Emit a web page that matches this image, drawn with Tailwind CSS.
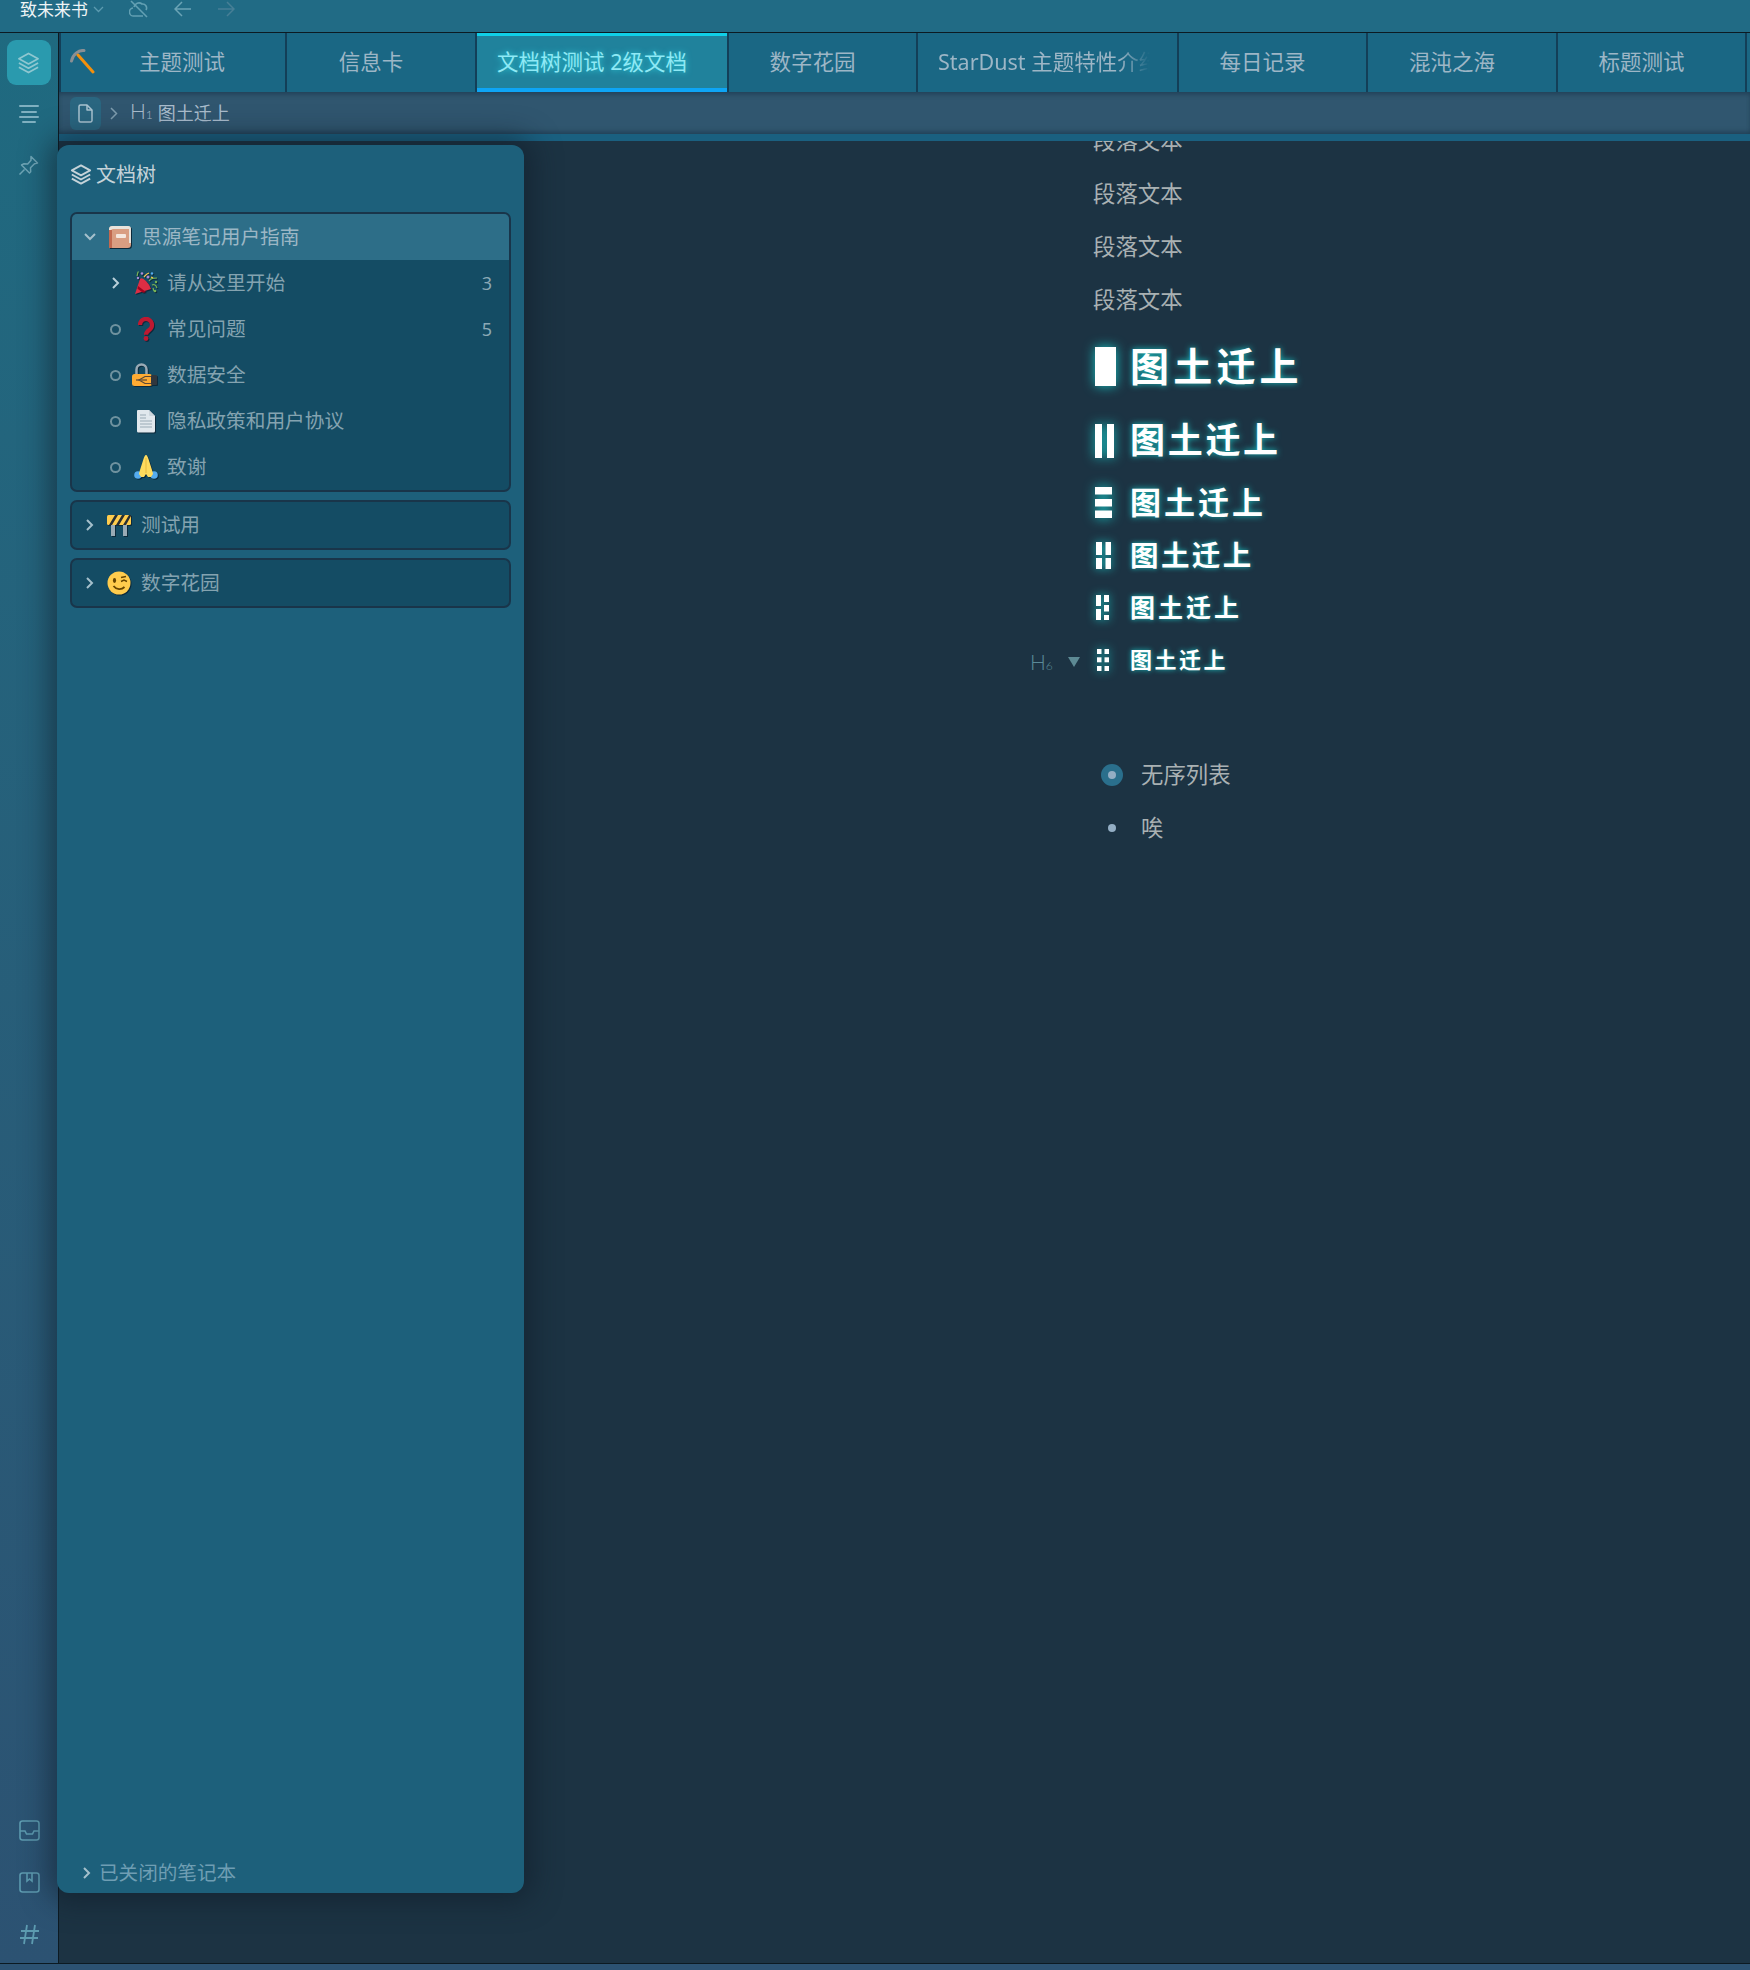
<!DOCTYPE html>
<html lang="zh">
<head>
  <meta charset="UTF-8" />
  <title>致未来书</title>
  <script src="https://cdn.jsdelivr.net/npm/@tailwindcss/browser@4"></script>
</head>
<body class="bg-[#1c3343] font-['Noto_Sans','Noto_Sans_CJK_SC',sans-serif]">
<div class="relative w-[1750px] h-[1970px] overflow-hidden flex flex-col">

  <!-- Top bar -->
  <div class="h-[33px] shrink-0 border-b border-[#0c1a22] bg-[#216b85] flex items-start">
    <span class="ml-[20px] text-[17px] leading-[20px] text-[#eef4f6]">致未来书</span>
    <svg class="ml-[5px] mt-[6px] w-[11px] h-[7px]" viewBox="0 0 11 7" fill="none" stroke="#5c9bb0" stroke-width="1.3"><path d="M1 1l4.500 4.500L10 1"/></svg>
    <svg class="ml-[25px] mt-[-1px] w-[20px] h-[20px]" viewBox="0 0 20 20" fill="none" stroke="#63a0b3" stroke-width="1.6"><path d="M5 8a5 5 0 0 1 8-3 4 4 0 0 1 4 6M4 9a4 4 0 0 0 1 8h9M2 2l16 16"/></svg>
    <svg class="ml-[25px] mt-[1px] w-[18px] h-[16px]" viewBox="0 0 18 16" fill="none" stroke="#6ba4b6" stroke-width="1.5"><path d="M17 8H1M8 1L1 8l7 7"/></svg>
    <svg class="ml-[25px] mt-[1px] w-[18px] h-[16px]" viewBox="0 0 18 16" fill="none" stroke="#477f96" stroke-width="1.5"><path d="M1 8h16M10 1l7 7-7 7"/></svg>
  </div>

  <div class="flex-1 flex min-h-0">
    <!-- Left dock -->
    <div class="w-[59px] shrink-0 border-r border-[#0c1a22] bg-gradient-to-b from-[#1f6a80] to-[#2c5272] flex flex-col items-center pb-[18px]">
      <div class="mt-[7px] ml-[-1px] w-[44px] h-[45px] rounded-[9px] bg-[#2a9aae] flex items-center justify-center">
        <svg class="w-[23px] h-[23px]" viewBox="0 0 24 24" fill="none" stroke="#8fc7d0" stroke-width="1.800" stroke-linejoin="round"><path d="M12 2.500l10 5.500-10 5.500L2 8z"/><path d="M2 12.500l10 5.500 10-5.500M2 17l10 5.500L22 17"/></svg>
      </div>
      <svg class="mt-[18px] ml-[-1px] w-[20px] h-[21px]" viewBox="0 0 20 21" fill="none" stroke="#7fb0c0" stroke-width="2" stroke-linecap="round"><path d="M1 3h18M3 9h14M1 14h18M4 19h12"/></svg>
      <svg class="mt-[31px] ml-[-1px] w-[21px] h-[21px]" viewBox="0 0 21 21" fill="none" stroke="#6fa5b6" stroke-width="1.500" stroke-linejoin="round"><path d="M13 1.500l6.500 6.500-3 .8-4 4 .2 4-1.200 1.200-8-8L5.700 8.800l4 .2 3.300-3.800z M6.500 14.500L1.500 19.500"/></svg>
      <div class="mt-auto flex flex-col items-center">
        <svg class="w-[21px] h-[21px]" viewBox="0 0 21 21" fill="none" stroke="#5d9bb0" stroke-width="1.600"><rect x="1" y="1" width="19" height="19" rx="2.500"/><path d="M1 11h5l1.500 3h6l1.500-3h5"/></svg>
        <svg class="mt-[31px] w-[21px] h-[21px]" viewBox="0 0 21 21" fill="none" stroke="#5d9bb0" stroke-width="1.600"><rect x="1" y="1" width="19" height="19" rx="2.500"/><path d="M8 1v8l2.500-2 2.500 2V1"/></svg>
        <svg class="mt-[31px] w-[21px] h-[21px]" viewBox="0 0 21 21" fill="none" stroke="#5d9bb0" stroke-width="1.800"><path d="M8 1L5 20M16 1l-3 19M2 7h18M1 14h18"/></svg>
      </div>
    </div>

    <div class="flex-1 flex flex-col min-w-0">
      <!-- Tabs -->
      <div class="h-[59px] shrink-0 flex bg-[#133f58] text-[21.500px] text-[#9db6c6] pl-[2px] gap-[2px]">
        <div class="w-[224px] bg-[#1a6784] flex items-center relative">
          <svg class="absolute left-[9px] top-[16px] w-[25px] h-[25px]" viewBox="0 0 25 25" fill="none" stroke-linecap="round"><path d="M1.500 12C3 5 9 1 14 1.500" stroke="#8a8f94" stroke-width="3"/><path d="M8 6l15 17" stroke="#f4900c" stroke-width="3"/></svg>
          <span class="ml-[78px]">主题测试</span>
        </div>
        <div class="w-[188px] pr-[20px] bg-[#1a6784] flex items-center justify-center">信息卡</div>
        <div class="w-[250px] pr-[20px] bg-[#20829c] border-t-[3px] border-t-[#10cfe8] border-b-[4px] border-b-[#0ea5f5] flex items-center justify-center text-[#8fe9f5] [text-shadow:0_0_6px_#2dd4e0]">文档树测试 2级文档</div>
        <div class="w-[187px] pr-[20px] bg-[#1a6784] flex items-center justify-center">数字花园</div>
        <div class="w-[259px] bg-[#1a6784] flex items-center pl-[20px]">
          <span class="w-[212px] overflow-hidden whitespace-nowrap [mask-image:linear-gradient(to_right,#000_85%,transparent)]">StarDust 主题特性介绍</span>
        </div>
        <div class="w-[187px] pr-[20px] bg-[#1a6784] flex items-center justify-center">每日记录</div>
        <div class="w-[188px] pr-[20px] bg-[#1a6784] flex items-center justify-center">混沌之海</div>
        <div class="w-[187px] pr-[20px] bg-[#1a6784] flex items-center justify-center">标题测试</div>
        <div class="flex-1 bg-[#1a6784]"></div>
      </div>

      <!-- Breadcrumb -->
      <div class="h-[42px] shrink-0 bg-[#30566f] shadow-[inset_0_4px_5px_-2px_#203f55,inset_0_-4px_5px_-2px_#203f55] flex items-center pl-[11px] text-[18px] text-[#a9bccc]">
        <div class="w-[31px] h-[33px] rounded-[6px] bg-[#2a6680] flex items-center justify-center">
          <svg class="w-[15px] h-[19px]" viewBox="0 0 15 19" fill="none" stroke="#a9c3d0" stroke-width="1.500" stroke-linejoin="round"><path d="M2.500 1h6.500l5 5v10.500a1.500 1.500 0 0 1-1.500 1.500h-10A1.500 1.500 0 0 1 1 16.500v-14A1.500 1.500 0 0 1 2.500 1z"/><path d="M9 1v5h5"/></svg>
        </div>
        <svg class="ml-[9px] w-[8px] h-[13px]" viewBox="0 0 8 13" fill="none" stroke="#7e9cae" stroke-width="1.500"><path d="M1 1l5.500 5.500L1 12"/></svg>
        <span class="ml-[12px] text-[21px] leading-[28px] font-['Lato'] font-light">H<span class="text-[12px]">1</span></span>
        <span class="ml-[5px]">图土迁上</span>
      </div>

      <div class="h-[7px] shrink-0 bg-[#1a6080]"></div>

      <!-- Editor -->
      <div class="flex-1 min-h-0 overflow-hidden pl-[1035px] text-[22.400px] text-[#a9b1b3] relative">
        <div class="mt-[-27px]">
          <p class="h-[53px] leading-[53px] ml-[-1px]">段落文本</p>
          <p class="h-[53px] leading-[53px] ml-[-1px]">段落文本</p>
          <p class="h-[53px] leading-[53px] ml-[-1px]">段落文本</p>
          <p class="h-[53px] leading-[53px] ml-[-1px]">段落文本</p>

          <div class="h-[81px] flex items-center font-bold text-white text-[39px] tracking-[4.200px] [text-shadow:0_0_6px_#19c2c2]">
            <svg class="ml-[1px] w-[21px] h-[39px] overflow-visible drop-shadow-[0_0_6px_#19c2c2]" viewBox="0 0 21 39" fill="#fff"><rect width="21" height="39"/></svg>
            <span class="ml-[14px]">图土迁上</span>
          </div>
          <div class="h-[67px] flex items-center font-bold text-white text-[35px] tracking-[2.700px] [text-shadow:0_0_6px_#19c2c2]">
            <svg class="ml-[1px] w-[19px] h-[34px] overflow-visible drop-shadow-[0_0_6px_#19c2c2]" viewBox="0 0 19 34" fill="#fff"><rect width="7" height="34"/><rect x="12" width="7" height="34"/></svg>
            <span class="ml-[16px]">图土迁上</span>
          </div>
          <div class="h-[57px] flex items-center font-bold text-white text-[31px] tracking-[3px] [text-shadow:0_0_6px_#19c2c2]">
            <svg class="ml-[1px] w-[17px] h-[31px] overflow-visible drop-shadow-[0_0_6px_#19c2c2]" viewBox="0 0 17 31" fill="#fff"><rect width="17" height="7.500"/><rect y="12" width="17" height="7.500"/><rect y="23.500" width="17" height="7.500"/></svg>
            <span class="ml-[18px]">图土迁上</span>
          </div>
          <div class="h-[47px] translate-y-[1px] flex items-center font-bold text-white text-[28.500px] tracking-[2.400px] [text-shadow:0_0_5px_#19c2c2]">
            <svg class="ml-[2px] w-[15px] h-[27px] overflow-visible drop-shadow-[0_0_5px_#19c2c2]" viewBox="0 0 15 27" fill="#fff"><rect width="6" height="13"/><rect y="16" width="6" height="11"/><rect x="9.500" width="5.500" height="13"/><rect x="9.500" y="16" width="5.500" height="11"/></svg>
            <span class="ml-[19px]">图土迁上</span>
          </div>
          <div class="h-[59px] flex items-center font-bold text-white text-[25px] tracking-[3px] [text-shadow:0_0_5px_#19c2c2]">
            <svg class="ml-[2px] w-[13px] h-[25px] overflow-visible drop-shadow-[0_0_5px_#19c2c2]" viewBox="0 0 13 25" fill="#fff"><rect width="5" height="11"/><rect y="14" width="5" height="11"/><rect x="8" width="5" height="7"/><rect x="8" y="10" width="5" height="6.500"/><rect x="8" y="20" width="5" height="5"/></svg>
            <span class="ml-[21px]">图土迁上</span>
          </div>
          <div class="h-[45px] flex items-center font-bold text-white text-[22px] tracking-[2.500px] [text-shadow:0_0_5px_#19c2c2] relative">
            <span class="absolute left-[-64px] top-[11px] text-[21px] leading-[28px] font-['Lato'] font-light text-[#5a8a97] [text-shadow:none] tracking-normal">H<span class="text-[12px]">6</span></span>
            <svg class="absolute left-[-26px] top-[20px] w-[12px] h-[10px]" viewBox="0 0 12 10" fill="#5d8a94"><path d="M0 0h12L6 10z"/></svg>
            <svg class="ml-[3px] w-[12px] h-[22px] overflow-visible drop-shadow-[0_0_5px_#19c2c2]" viewBox="0 0 12 22" fill="#fff"><rect width="4.500" height="5"/><rect y="8.300" width="4.500" height="5"/><rect y="17" width="4.500" height="5"/><rect x="7.500" width="4.500" height="5"/><rect x="7.500" y="8.300" width="4.500" height="5"/><rect x="7.500" y="17" width="4.500" height="5"/></svg>
            <span class="ml-[21px]">图土迁上</span>
          </div>

          <ul class="mt-[66px] ml-[7px]">
            <li class="h-[53px] flex items-center">
              <span class="w-[22px] h-[22px] rounded-full bg-[#2a6f8c] flex items-center justify-center"><span class="w-[8px] h-[8px] rounded-full bg-[#93aec4]"></span></span>
              <span class="ml-[18px]">无序列表</span>
            </li>
            <li class="h-[53px] flex items-center">
              <span class="w-[22px] h-[22px] flex items-center justify-center"><span class="w-[8px] h-[8px] rounded-full bg-[#93aec4]"></span></span>
              <span class="ml-[18px]">唉</span>
            </li>
          </ul>
        </div>
      </div>
    </div>
  </div>

  <!-- Status bar -->
  <div class="h-[7px] shrink-0 border-t border-[#0c1a22] bg-[#2c5272]"></div>

  <!-- Floating doc tree -->
  <aside class="absolute left-[57px] top-[145px] w-[467px] h-[1748px] rounded-[12px] bg-[#1d607b] shadow-[0_0_28px_8px_rgba(14,28,40,0.55)] flex flex-col">
    <div class="h-[67px] shrink-0 flex items-center pl-[13px] pb-[8px] text-[20px] text-[#c5d3d9]">
      <svg class="w-[22px] h-[23px]" viewBox="0 0 24 24" fill="none" stroke="#c5d3d9" stroke-width="2" stroke-linejoin="round"><path d="M12 2l10 5.500-10 5.500L2 7.500z"/><path d="M2 12l10 5.500L22 12M2 16.500L12 22l10-5.500"/></svg>
      <span class="ml-[4px]">文档树</span>
    </div>

    <div class="mx-[13px] flex flex-col gap-[8px] text-[19.700px] text-[#84a3b0]">
      <!-- 思源笔记用户指南 -->
      <div class="h-[280px] rounded-[7px] border-2 border-[#19354a] bg-[#144c64] overflow-hidden">
        <div class="h-[46px] bg-[#2d6e88] flex items-center text-[#9cb7c5]">
          <svg class="ml-[12px] w-[12px] h-[8px]" viewBox="0 0 12 8" fill="none" stroke="#a5c0cc" stroke-width="2"><path d="M1 1l5 5 5-5"/></svg>
          <svg class="ml-[12px] w-[24px] h-[24px] drop-shadow-[1.500px_1.500px_0_#0c2a3b]" viewBox="0 0 24 24"><rect x="1" y="1" width="22" height="22" rx="3.500" fill="#d99e82"/><path d="M1 4.500A3.500 3.500 0 0 1 4.500 1H20a3 3 0 0 1 3 3v14h-2V4H5a2 2 0 0 0-2 2v17a3 3 0 0 1-2-3z" fill="#e8e3dc"/><rect x="1" y="5" width="3" height="18" fill="#c1694f"/><rect x="8" y="9" width="10" height="4" rx="1" fill="#f5e8df"/></svg>
          <span class="ml-[10px]">思源笔记用户指南</span>
        </div>
        <div class="h-[46px] flex items-center relative">
          <svg class="ml-[40px] w-[8px] h-[12px]" viewBox="0 0 8 12" fill="none" stroke="#b9cfd9" stroke-width="2"><path d="M1 1l5 5-5 5"/></svg>
          <svg class="ml-[14px] w-[24px] h-[24px] drop-shadow-[1.500px_1.500px_0_#0c2a3b]" viewBox="0 0 24 24"><path d="M1 23L6 8q2-2 6 2t5 8z" fill="#dd2e44"/><path d="M4 15l8 6-3 .8-5.500-4z" fill="#a0041e"/><circle cx="8" cy="2.500" r="1.300" fill="#aa8dd8"/><circle cx="18" cy="2.500" r="1.200" fill="#55acee"/><circle cx="22" cy="11" r="1.200" fill="#77b255"/><circle cx="14" cy="6" r="1.500" fill="#aa8dd8"/><circle cx="21" cy="20" r="1.300" fill="#77b255"/><circle cx="4" cy="7" r="1.200" fill="#aa8dd8"/><path d="M3 5c1-2 0-3 1.500-4.500M15 10c2-3 4-3 8-3M18 14c2-1 4 0 5 3M19 17l1 3" fill="none" stroke="#77b255" stroke-width="1.200"/><path d="M10 6c1-1 2-3 5-4M17 6l2 1" fill="none" stroke="#ffcc4d" stroke-width="1.300"/></svg>
          <span class="ml-[9px]">请从这里开始</span>
          <span class="absolute right-[17px] text-[18px] text-[#8ba8b5]">3</span>
        </div>
        <div class="h-[46px] flex items-center relative">
          <span class="ml-[38px] w-[11px] h-[11px] rounded-full border-2 border-[#6f929f]"></span>
          <svg class="ml-[13px] w-[24px] h-[24px] drop-shadow-[1.500px_1.500px_0_#0c2a3b]" viewBox="0 0 24 24" fill="none"><path d="M6 8a6 6 0 1 1 9.500 4.800c-2.500 1.800-3.500 3-3.500 5" stroke="#be1931" stroke-width="4.200"/><circle cx="12" cy="21.500" r="2.400" fill="#be1931"/></svg>
          <span class="ml-[9px]">常见问题</span>
          <span class="absolute right-[17px] text-[18px] text-[#8ba8b5]">5</span>
        </div>
        <div class="h-[46px] flex items-center">
          <span class="ml-[38px] w-[11px] h-[11px] rounded-full border-2 border-[#6f929f]"></span>
          <svg class="ml-[11px] w-[26px] h-[24px] drop-shadow-[1.500px_1.500px_0_#0c2a3b]" viewBox="0 0 26 24"><path d="M4.500 12V6.500a5 5 0 0 1 10 0V12" fill="none" stroke="#99aab5" stroke-width="2.500"/><rect x="0" y="11" width="20" height="12" rx="2.500" fill="#ffac33"/><path d="M7 17l6-3.500h7v7h-7z" fill="#ffac33" stroke="#5c4a36" stroke-width="1.200"/><path d="M4 17h11" stroke="#5c4a36" stroke-width="1.200"/><rect x="19" y="12" width="6" height="10" rx="1" fill="#31373d"/></svg>
          <span class="ml-[9px]">数据安全</span>
        </div>
        <div class="h-[46px] flex items-center">
          <span class="ml-[38px] w-[11px] h-[11px] rounded-full border-2 border-[#6f929f]"></span>
          <svg class="ml-[13px] w-[24px] h-[24px] drop-shadow-[1.500px_1.500px_0_#0c2a3b]" viewBox="0 0 24 24"><path d="M4 1h11l6 6v15a1.500 1.500 0 0 1-1.500 1.500h-15.500A1.500 1.500 0 0 1 3 22V2a1 1 0 0 1 1-1z" fill="#e1e8ed"/><path d="M15 1l6 6h-5a1 1 0 0 1-1-1z" fill="#ccd6dd"/><path d="M6 9h6M6 12h12M6 15h12M6 18h12M6 6h6" stroke="#99aab5" stroke-width="1"/></svg>
          <span class="ml-[9px]">隐私政策和用户协议</span>
        </div>
        <div class="h-[46px] flex items-center">
          <span class="ml-[38px] w-[11px] h-[11px] rounded-full border-2 border-[#6f929f]"></span>
          <svg class="ml-[13px] w-[24px] h-[24px] drop-shadow-[1.500px_1.500px_0_#0c2a3b]" viewBox="0 0 24 24"><circle cx="4" cy="20" r="3.800" fill="#55acee"/><circle cx="20" cy="20" r="3.800" fill="#55acee"/><path d="M12 0c-1 0-1.800 2-2.500 4L6 15c-.5 2-1 3-1 4l2 3h3l2-3 2 3h3l2-3c0-1-.5-2-1-4L14.500 4C13.800 2 13 0 12 0z" fill="#ffdc5d"/><path d="M12 3v15" stroke="#e6b93f" stroke-width="1"/></svg>
          <span class="ml-[9px]">致谢</span>
        </div>
      </div>

      <!-- 测试用 -->
      <div class="h-[50px] rounded-[7px] border-2 border-[#19354a] bg-[#144c64] flex items-center">
        <svg class="ml-[14px] w-[8px] h-[12px]" viewBox="0 0 8 12" fill="none" stroke="#a5c0cc" stroke-width="2"><path d="M1 1l5 5-5 5"/></svg>
        <svg class="ml-[13px] w-[24px] h-[22px] drop-shadow-[1.500px_1.500px_0_#0c2a3b]" viewBox="0 0 24 22"><rect x="4" y="8" width="4" height="14" fill="#99aab5"/><rect x="16" y="8" width="4" height="14" fill="#99aab5"/><rect y="1" width="24" height="10" rx="1.500" fill="#ffcc4d"/><path d="M2 11l6-10h3L5 11zM9 11l6-10h3l-6 10zM16 11l6-10h2v1l-5 9z" fill="#292f33"/></svg>
        <span class="ml-[10px]">测试用</span>
      </div>

      <!-- 数字花园 -->
      <div class="h-[50px] rounded-[7px] border-2 border-[#19354a] bg-[#144c64] flex items-center">
        <svg class="ml-[14px] w-[8px] h-[12px]" viewBox="0 0 8 12" fill="none" stroke="#a5c0cc" stroke-width="2"><path d="M1 1l5 5-5 5"/></svg>
        <svg class="ml-[13px] w-[24px] h-[24px] drop-shadow-[1.500px_1.500px_0_#0c2a3b]" viewBox="0 0 24 24"><circle cx="12" cy="12" r="11.500" fill="#ffcc4d"/><ellipse cx="7.500" cy="9.500" rx="1.600" ry="2.400" fill="#664500"/><path d="M14 10.500l3-1.500 3 1.500M14 6.500l5-1" stroke="#664500" stroke-width="1.400" fill="none"/><path d="M6.500 15c3 4 8 4 11 1" stroke="#664500" stroke-width="1.800" fill="none"/></svg>
        <span class="ml-[10px]">数字花园</span>
      </div>
    </div>

    <div class="mt-auto h-[40px] flex items-center pl-[26px] text-[19.600px] text-[#6f9eb3]">
      <svg class="w-[8px] h-[12px]" viewBox="0 0 8 12" fill="none" stroke="#a5c0cc" stroke-width="2"><path d="M1 1l5 5-5 5"/></svg>
      <span class="ml-[8px]">已关闭的笔记本</span>
    </div>
  </aside>
</div>
</body>
</html>
